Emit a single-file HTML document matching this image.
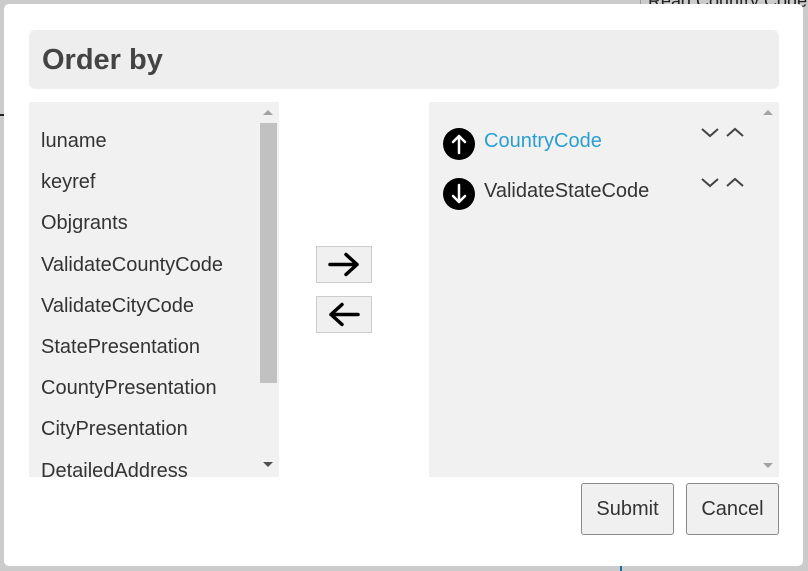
<!DOCTYPE html>
<html><head><style>
body{margin:0;width:808px;height:571px;background:#cbcbcb;position:relative;overflow:hidden;font-family:"Liberation Sans",Arial,sans-serif}
.dlg{position:absolute;left:4px;top:4px;width:799px;height:562px;background:#fff;border-radius:5px}
.hdr{position:absolute;left:29px;top:30px;width:750px;height:59px;background:#eee;border-radius:6px}
.hdr span{position:absolute;left:13px;top:14px;font-size:29px;font-weight:bold;color:#444}
.list{position:absolute;top:102px;height:375px;background:#f1f1f1;overflow:hidden}
.it{position:absolute;left:12px;font-size:20px;color:#333}
.btn{position:absolute;background:#f0f0f0;border:1px solid #ccc;box-sizing:border-box}
.b2{position:absolute;background:#f0f0f0;border:1px solid #888;border-radius:3px;box-sizing:border-box;font-size:20px;color:#333;text-align:center;line-height:50px}
.tri{position:absolute;width:0;height:0;border-left:5px solid transparent;border-right:5px solid transparent}
</style></head><body>
<div style="position:absolute;left:0;top:114px;width:10px;height:2px;background:#222"></div>
<div style="position:absolute;left:640px;top:0;width:1px;height:8px;background:#999"></div>
<div style="position:absolute;left:648px;top:-9px;font-size:18px;color:#222">Read Country Code</div>
<div style="position:absolute;left:620px;top:566px;width:2px;height:5px;background:#1a6ea8"></div>
<div class="dlg"></div>
<div class="hdr"><span>Order by</span></div>
<div class="list" style="left:29px;width:250px">
<div class="it" style="top:28px">luname</div>
<div class="it" style="top:69px">keyref</div>
<div class="it" style="top:110px">Objgrants</div>
<div class="it" style="top:152px">ValidateCountyCode</div>
<div class="it" style="top:193px">ValidateCityCode</div>
<div class="it" style="top:234px">StatePresentation</div>
<div class="it" style="top:275px">CountyPresentation</div>
<div class="it" style="top:316px">CityPresentation</div>
<div class="it" style="top:358px">DetailedAddress</div>
<div style="position:absolute;left:231px;top:21px;width:17px;height:260px;background:#c1c1c1"></div>
<div class="tri" style="left:234px;top:8px;border-bottom:5px solid #a3a3a3"></div>
<div class="tri" style="left:234px;top:360px;border-top:5px solid #505050"></div>
</div>
<div class="btn" style="left:316px;top:246px;width:56px;height:37px">
<svg width="56" height="37" style="position:absolute;left:-1px;top:-1px"><path d="M14 18.5H41M30 8.5L41 18.5L30 28.5" stroke="#000" stroke-width="3.5" fill="none" stroke-linecap="round" stroke-linejoin="round"/></svg></div>
<div class="btn" style="left:316px;top:296px;width:56px;height:37px">
<svg width="56" height="37" style="position:absolute;left:-1px;top:-1px"><path d="M42 18.5H15M26 8.5L15 18.5L26 28.5" stroke="#000" stroke-width="3.5" fill="none" stroke-linecap="round" stroke-linejoin="round"/></svg></div>
<div class="list" style="left:429px;width:350px">
<svg width="40" height="100" style="position:absolute;left:12px;top:23px">
<circle cx="18" cy="19" r="16" fill="#000"/><path d="M18 28V11M12 17L18 11L24 17" stroke="#fff" stroke-width="2.5" fill="none" stroke-linecap="round" stroke-linejoin="round"/>
<circle cx="18" cy="69" r="16" fill="#000"/><path d="M18 60V77M12 71L18 77L24 71" stroke="#fff" stroke-width="2.5" fill="none" stroke-linecap="round" stroke-linejoin="round"/>
</svg>
<div class="it" style="left:55px;top:28px;color:#2a9fd0">CountryCode</div>
<div class="it" style="left:55px;top:78px">ValidateStateCode</div>
<svg width="60" height="100" style="position:absolute;left:270px;top:20px">
<path d="M3 7L11 14L19 7M28 14L36 7L44 14" stroke="#444" stroke-width="2" fill="none"/>
<path d="M3 57L11 64L19 57M28 64L36 57L44 64" stroke="#444" stroke-width="2" fill="none"/>
</svg>
<div class="tri" style="left:334px;top:8px;border-bottom:5px solid #a3a3a3"></div>
<div class="tri" style="left:334px;top:361px;border-top:5px solid #a3a3a3"></div>
</div>
<div class="b2" style="left:581px;top:483px;width:93px;height:52px">Submit</div>
<div class="b2" style="left:686px;top:483px;width:93px;height:52px">Cancel</div>
</body></html>
